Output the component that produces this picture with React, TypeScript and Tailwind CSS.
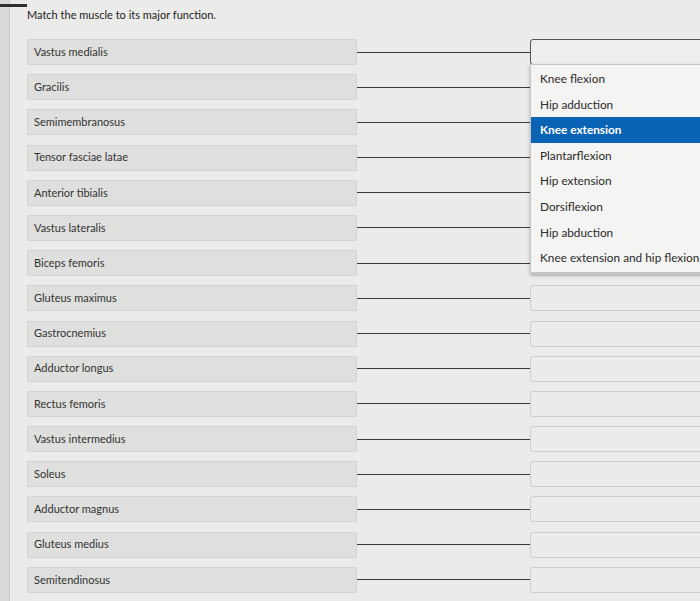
import React from "react";

const muscles = [
  "Vastus medialis",
  "Gracilis",
  "Semimembranosus",
  "Tensor fasciae latae",
  "Anterior tibialis",
  "Vastus lateralis",
  "Biceps femoris",
  "Gluteus maximus",
  "Gastrocnemius",
  "Adductor longus",
  "Rectus femoris",
  "Vastus intermedius",
  "Soleus",
  "Adductor magnus",
  "Gluteus medius",
  "Semitendinosus",
];

const functions = [
  "Knee flexion",
  "Hip adduction",
  "Knee extension",
  "Plantarflexion",
  "Hip extension",
  "Dorsiflexion",
  "Hip abduction",
  "Knee extension and hip flexion",
];

function Dropdown() {
  return (
    <ul className="absolute left-[-1px] top-full z-10 w-[182px] border border-[#c6c6c4] bg-[#f4f4f2] py-[1px] shadow-[0_2px_4px_rgba(0,0,0,0.25)]">
      {functions.map((f, i) => (
        <li
          key={f}
          className={
            i === 2
              ? "flex h-[25.6px] items-center whitespace-nowrap bg-[#0b63b6] pl-[9px] text-[11.8px] font-bold text-white"
              : "flex h-[25.6px] items-center whitespace-nowrap pl-[9px] text-[11.8px] text-[#2a2a2a]"
          }
        >
          {f}
        </li>
      ))}
    </ul>
  );
}

function Row({ label, index }: { label: string; index: number }) {
  const open = index === 0;
  return (
    <div className="flex h-[26px] items-center">
      <div className="flex h-full w-[330px] shrink-0 items-center border border-[#d3d3d1] bg-[#dfdfdd] pl-[6px] text-[11px] text-[#333]">
        {label}
      </div>
      <div className="h-px w-[173px] shrink-0 bg-[#3a3a3a]" />
      <div
        className={
          open
            ? "relative h-full w-[182px] shrink-0 rounded-[3px] border border-[#555] bg-[#efefed]"
            : "relative h-full w-[182px] shrink-0 rounded-[3px] border border-[#cdcdcb] bg-[#ebebe9]"
        }
      >
        {open && <Dropdown />}
      </div>
    </div>
  );
}

export default function App() {
  return (
    <div
      className="relative flex h-[601px] w-[700px] overflow-hidden bg-[#ebebe9]"
      style={{ fontFamily: "Lato, 'Open Sans', sans-serif" }}
    >
      <div className="absolute left-0 top-[4px] h-[3px] w-[27px] bg-[#2f2f2f]" />
      <div className="w-[10px] shrink-0 border-r border-[#c9c9c7] bg-[#d9d9d7]" />
      <div className="flex flex-1 flex-col pl-[17px] pt-[7px]">
        <h1 className="text-[11px] leading-[16px] text-[#222]">Match the muscle to its major function.</h1>
        <div className="mt-[16px] flex flex-col gap-[9.2px]">
          {muscles.map((m, i) => (
            <Row key={m} label={m} index={i} />
          ))}
        </div>
      </div>
    </div>
  );
}
